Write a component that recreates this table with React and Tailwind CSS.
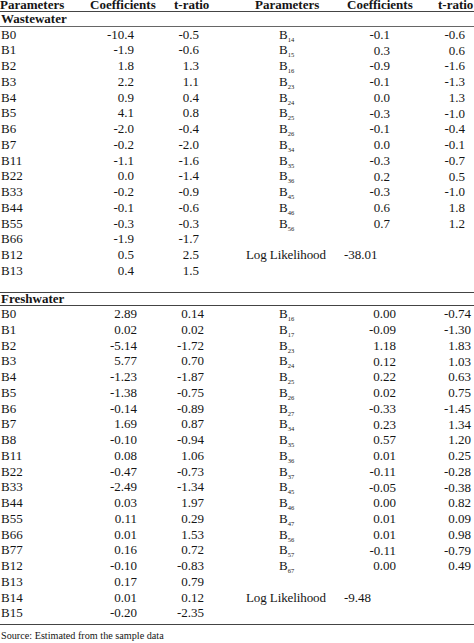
import React from "react";

const wasteLeft = [
  ["B0", "-10.4", "-0.5"],
  ["B1", "-1.9", "-0.6"],
  ["B2", "1.8", "1.3"],
  ["B3", "2.2", "1.1"],
  ["B4", "0.9", "0.4"],
  ["B5", "4.1", "0.8"],
  ["B6", "-2.0", "-0.4"],
  ["B7", "-0.2", "-2.0"],
  ["B11", "-1.1", "-1.6"],
  ["B22", "0.0", "-1.4"],
  ["B33", "-0.2", "-0.9"],
  ["B44", "-0.1", "-0.6"],
  ["B55", "-0.3", "-0.3"],
  ["B66", "-1.9", "-1.7"],
  ["B12", "0.5", "2.5"],
  ["B13", "0.4", "1.5"],
];

const wasteRight = [
  ["14", "-0.1", "-0.6"],
  ["15", "0.3", "0.6"],
  ["16", "-0.9", "-1.6"],
  ["23", "-0.1", "-1.3"],
  ["24", "0.0", "1.3"],
  ["25", "-0.3", "-1.0"],
  ["26", "-0.1", "-0.4"],
  ["34", "0.0", "-0.1"],
  ["35", "-0.3", "-0.7"],
  ["36", "0.2", "0.5"],
  ["45", "-0.3", "-1.0"],
  ["46", "0.6", "1.8"],
  ["56", "0.7", "1.2"],
];

const freshLeft = [
  ["B0", "2.89", "0.14"],
  ["B1", "0.02", "0.02"],
  ["B2", "-5.14", "-1.72"],
  ["B3", "5.77", "0.70"],
  ["B4", "-1.23", "-1.87"],
  ["B5", "-1.38", "-0.75"],
  ["B6", "-0.14", "-0.89"],
  ["B7", "1.69", "0.87"],
  ["B8", "-0.10", "-0.94"],
  ["B11", "0.08", "1.06"],
  ["B22", "-0.47", "-0.73"],
  ["B33", "-2.49", "-1.34"],
  ["B44", "0.03", "1.97"],
  ["B55", "0.11", "0.29"],
  ["B66", "0.01", "1.53"],
  ["B77", "0.16", "0.72"],
  ["B12", "-0.10", "-0.83"],
  ["B13", "0.17", "0.79"],
  ["B14", "0.01", "0.12"],
  ["B15", "-0.20", "-2.35"],
];

const freshRight = [
  ["16", "0.00", "-0.74"],
  ["17", "-0.09", "-1.30"],
  ["23", "1.18", "1.83"],
  ["24", "0.12", "1.03"],
  ["25", "0.22", "0.63"],
  ["26", "0.02", "0.75"],
  ["27", "-0.33", "-1.45"],
  ["34", "0.23", "1.34"],
  ["35", "0.57", "1.20"],
  ["36", "0.01", "0.25"],
  ["37", "-0.11", "-0.28"],
  ["45", "-0.05", "-0.38"],
  ["46", "0.00", "0.82"],
  ["47", "0.01", "0.09"],
  ["56", "0.01", "0.98"],
  ["57", "-0.11", "-0.79"],
  ["67", "0.00", "0.49"],
];

function LeftRows({ rows, cols }) {
  return (
    <div className="flex flex-col w-[234px] shrink-0">
      {rows.map(([p, c, t], i) => (
        <div key={i} className={`grid ${cols} h-[15.75px] items-center leading-[15.75px]`}>
          <div className="pl-px">{p}</div>
          <div className="text-right">{c}</div>
          <div className="text-right">{t}</div>
        </div>
      ))}
    </div>
  );
}

function RightRows({ rows, cols, ll, llv }) {
  return (
    <div className="flex flex-col w-[256px] shrink-0">
      {rows.map(([p, c, t], i) => (
        <div key={i} className={`grid ${cols} h-[15.75px] items-center leading-[15.75px]`}>
          <div className="pl-[45px]">
            B<span className="text-[6.5px] align-[-3px] leading-none">{p}</span>
          </div>
          <div className="text-right">{c}</div>
          <div className="text-right">{t}</div>
        </div>
      ))}
      <div className="h-[15.75px]" />
      <div className={`flex h-[15.75px] items-center leading-[15.75px] ${ll}`}>
        <div className="pl-[12px] w-[110px] tracking-[-0.1px]">Log Likelihood</div>
        <div className="text-right flex-1">{llv}</div>
        <div className="flex-1" />
      </div>
    </div>
  );
}

export default function App() {
  return (
    <div
      className="w-[474px] h-[643px] overflow-hidden bg-white text-[#151515] text-[13px]"
      style={{ fontFamily: '"Liberation Serif", "Times New Roman", serif' }}
    >
      <div className="w-[490px]">
        {/* Header */}
        <div className="flex h-[11.5px] leading-[9px] font-bold border-b-[1.5px] border-[#444]">
          <div className="flex w-[234px] shrink-0">
            <div className="w-[90px]">Parameters</div>
            <div className="w-[84px]">Coefficients</div>
            <div>t-ratio</div>
          </div>
          <div className="flex pl-[21px]">
            <div className="w-[92px]">Parameters</div>
            <div className="w-[91px]">Coefficients</div>
            <div>t-ratio</div>
          </div>
        </div>

        {/* Wastewater */}
        <div className="h-[15px] leading-[14px] font-bold border-b border-[#666] pl-px">Wastewater</div>
        <div className="flex h-[265px]">
          <LeftRows rows={wasteLeft} cols="grid-cols-[80px_54px_65px]" />
          <RightRows
            rows={wasteRight}
            cols="grid-cols-[100px_56px_75px]"
            ll="w-[163px]"
            llv="-38.01"
          />
        </div>

        {/* Freshwater */}
        <div className="h-[14.5px] leading-[12px] font-bold border-y-[1.5px] border-[#444] pl-px">Freshwater</div>
        <div className="flex h-[318px]">
          <LeftRows rows={freshLeft} cols="grid-cols-[80px_57px_67px]" />
          <RightRows
            rows={freshRight}
            cols="grid-cols-[100px_62px_75px]"
            ll="w-[162px]"
            llv="-9.48"
          />
        </div>

        <div className="border-t-[1.5px] border-[#444] pt-[6px] text-[10.2px] leading-[10px] pl-px">
          Source: Estimated from the sample data
        </div>
      </div>
    </div>
  );
}
